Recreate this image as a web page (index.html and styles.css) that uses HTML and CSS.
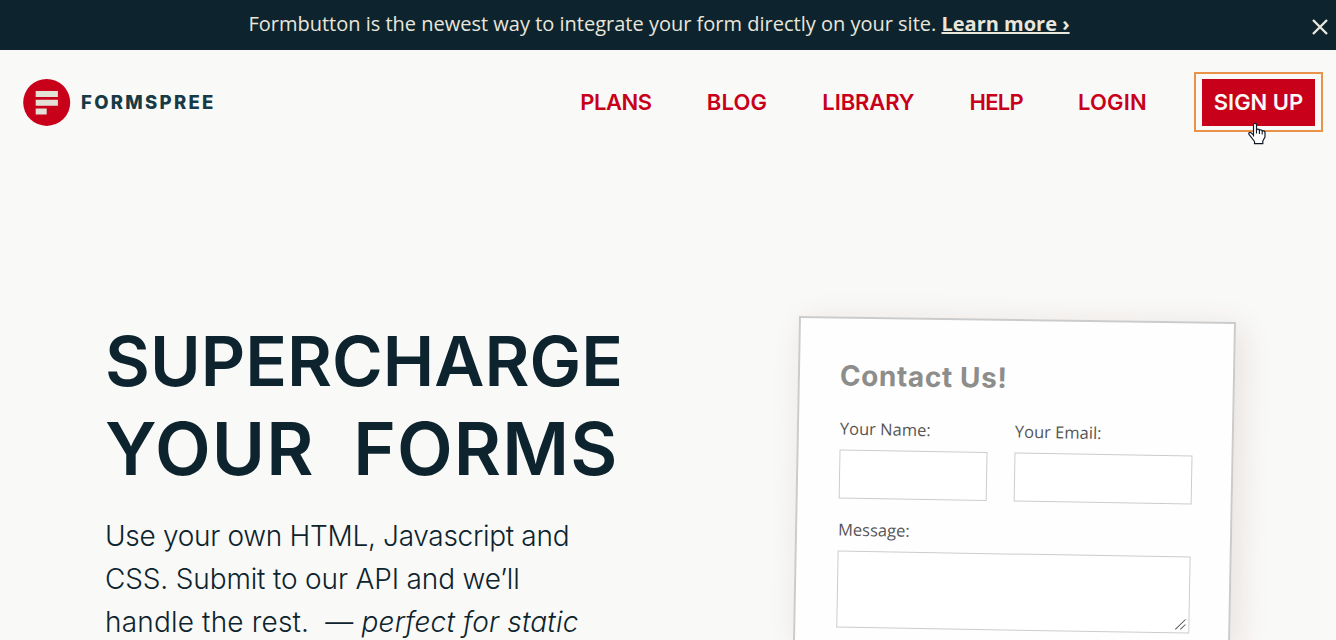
FILE: index.html
```html
<!DOCTYPE html>
<html lang="en">
<head>
  <meta charset="UTF-8">
  <title>Formspree</title>
  <meta name="viewport" content="width=device-width, initial-scale=1">
  <link rel="stylesheet" href="styles.css">
</head>
<body>
  <div class="banner">
    <p>Formbutton is the newest way to integrate your form directly on your site. <a href="#">Learn more ›</a></p>
    <button class="banner-close" aria-label="Close">
      <svg width="16" height="16" viewBox="0 0 16 16"><path d="M1 1L15 15M15 1L1 15" stroke="#e9e6dc" stroke-width="2.4" fill="none"/></svg>
    </button>
  </div>

  <header class="header">
    <a class="logo" href="#">
      <svg width="48" height="48" viewBox="0 0 48 48">
        <circle cx="23.7" cy="24.4" r="23.5" fill="#c8001a"/>
        <path d="M12.7 13h22.2v6H12.7zM12.7 21.8h22.2v6H12.7zM12.7 30.5h11v6h-11z" fill="#e3e0d6"/>
      </svg>
      <span class="logo-text">FORMSPREE</span>
    </a>
    <nav class="nav">
      <a class="plans" href="#">PLANS</a>
      <a class="blog" href="#">BLOG</a>
      <a class="library" href="#">LIBRARY</a>
      <a class="help" href="#">HELP</a>
      <a class="login" href="#">LOGIN</a>
      <a class="signup" href="#">SIGN UP
        <svg class="pointer" width="19" height="24" viewBox="0 0 19 24">
          <path d="M5.5 14.5V2.6C5.5.9 8.5.9 8.5 2.6V8.3C8.5 6.7 11.4 6.9 11.4 8.6C11.5 7.3 14.2 7.5 14.2 9.3C14.4 8.3 17 8.8 17 10.5V15L14.8 19V21.7H6.5V19.5L1 12.3C.3 10.7 2 9.6 3.5 11.1L5.5 13.2" fill="#fff" stroke="#111827" stroke-width="1.2" stroke-linejoin="round"/>
          <path d="M8.5 8V11.5M11.4 8.5V12M14.2 9.5V12.5" stroke="#111827" stroke-width="1.1"/>
        </svg>
      </a>
    </nav>
  </header>

  <main class="hero">
    <section class="intro">
      <h1><span class="line-one">SUPERCHARGE</span><span class="line-two">YOUR&nbsp; FORMS</span></h1>
      <p><span class="row-one">Use your own HTML, Javascript and</span><br><span class="row-two">CSS. Submit to our API and we’ll</span><br><span class="row-three">handle the rest. &nbsp;— <em>perfect for static</em></span></p>
    </section>

    <form class="card">
      <h2>Contact Us!</h2>
      <div class="fields">
        <label>Your Name:<input type="text"></label>
        <label>Your Email:<input type="text"></label>
        <label class="message">Message:
          <span class="area"><svg width="12" height="12" viewBox="0 0 12 12"><path d="M1 11L11 1M6 11L11 6" stroke="#555" stroke-width="1"/></svg></span>
        </label>
      </div>
    </form>
  </main>
</body>
</html>
```

FILE: styles.css
```css
* {
  box-sizing: border-box;
}
body {
  margin: 0;
  height: 640px;
  overflow: hidden;
  background: #f9f9f7;
  color: #0d242e;
  font-family: "Open Sans", sans-serif;
}
a {
  text-decoration: none;
}
.banner {
  display: flex;
  align-items: center;
  height: 50px;
  background: #0d242e;
  color: #e9e6dc;
  font-size: 20px;
}
.banner p {
  flex: 1;
  margin: 0 0 3px;
  padding-left: 13px;
  text-align: center;
}
.banner a {
  color: #e9e6dc;
  font-weight: bold;
  text-decoration: underline;
}
.banner-close {
  display: flex;
  padding: 0;
  margin: 3px 8px 0 7px;
  border: none;
  background: none;
}
.header {
  display: flex;
  align-items: center;
  justify-content: space-between;
  height: 105px;
  padding: 0 21px 0 23px;
}
.logo {
  display: flex;
  align-items: center;
  gap: 10px;
  margin-bottom: 1px;
  color: #173a46;
}
.logo-text {
  font: 800 18.5px Inter, sans-serif;
  letter-spacing: 2.3px;
}
.nav {
  display: flex;
  align-items: center;
  gap: 55px;
  font: 600 22px Inter, sans-serif;
}
.nav a {
  padding-bottom: 2px;
  color: #c8001a;
}
.nav .plans {
  letter-spacing: -0.4px;
}
.nav .blog {
  letter-spacing: 0.2px;
}
.nav .library {
  letter-spacing: -0.1px;
}
.nav .help {
  letter-spacing: -0.7px;
}
.nav .login {
  letter-spacing: 0.2px;
}
.nav .signup {
  position: relative;
  display: flex;
  align-items: center;
  justify-content: center;
  width: 113px;
  height: 47px;
  background: #c8001a;
  color: #f9f9f7;
  white-space: nowrap;
}
.signup::after {
  content: "";
  position: absolute;
  inset: -7px -8px -6px;
  border: 2px solid #e8924a;
}
.pointer {
  position: absolute;
  z-index: 1;
  left: 46px;
  top: 43px;
}
.hero {
  display: flex;
  justify-content: space-between;
  height: 485px;
  padding: 162px 100px 0 105px;
}
.intro h1 {
  margin: 0;
  font: 600 69px/88px Inter, sans-serif;
}
.intro h1 span {
  display: block;
  white-space: pre;
}
.intro h1 .line-two {
  font-size: 72.5px;
  letter-spacing: 1.1px;
}
.intro p {
  margin: 22px 0 0;
  font: 300 28px/43px Inter, sans-serif;
  white-space: nowrap;
}
.row-one {
  letter-spacing: -0.3px;
}
.row-two {
  letter-spacing: -0.15px;
}
.row-three {
  letter-spacing: 0.18px;
}
.card {
  width: 437px;
  height: 324px;
  margin-top: -1px;
  padding: 36px 38px 0 40px;
  border: 2px solid #cbcbcb;
  border-bottom: none;
  background: #fefefe;
  box-shadow: 6px 6px 34px rgba(90, 20, 20, 0.11);
  transform: matrix(1, 0.0138, -0.0185, 1, 0, 0);
  transform-origin: 0 0;
}
.card h2 {
  margin: 0 0 21px;
  color: #8d8d8b;
  font: 700 28px/42px Inter, sans-serif;
  letter-spacing: 0.6px;
}
.fields {
  display: grid;
  grid-template-columns: 148px 178px;
  column-gap: 27px;
  row-gap: 20px;
  margin-left: 1px;
  color: #555;
  font-size: 16.5px;
  line-height: 22px;
  transform: skewY(0.18deg);
  transform-origin: 0 0;
}
.fields label {
  display: block;
}
.fields input,
.area {
  display: block;
  width: 100%;
  height: 49px;
  margin-top: 10px;
  border: 1px solid #ccc;
  background: #fff;
}
.message {
  grid-column: 1 / 3;
}
.fields .area {
  display: flex;
  align-items: flex-end;
  justify-content: flex-end;
  height: 77px;
  padding: 2px;
}
```
